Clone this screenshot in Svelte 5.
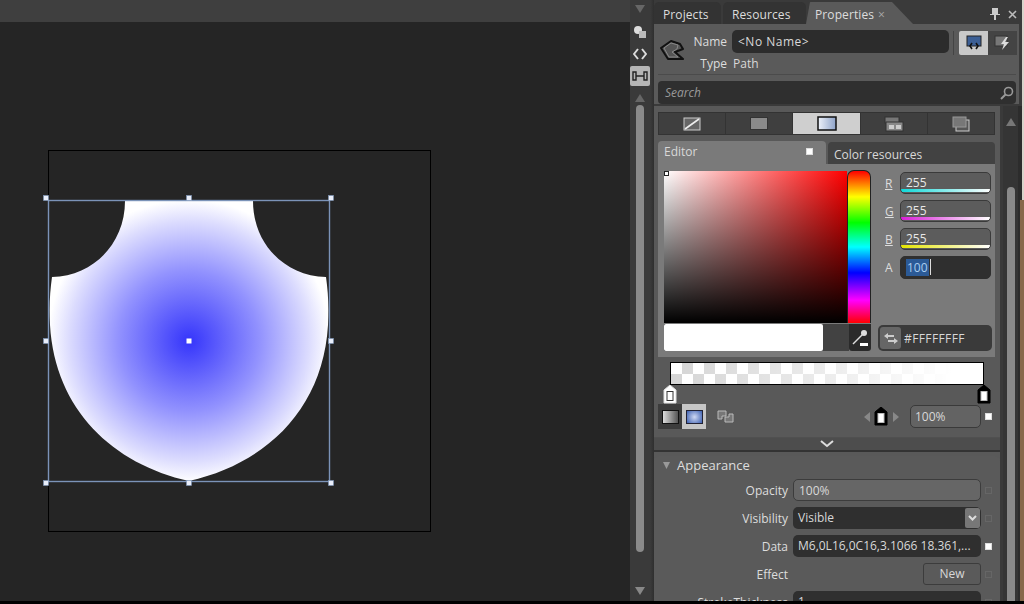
<script>
	const categories = ["none", "solid", "gradient", "tile", "resource"];
	const channels = [
		{ label: "R", value: 255, cls: "red" },
		{ label: "G", value: 255, cls: "green" },
		{ label: "B", value: 255, cls: "blue" }
	];
</script>

{#snippet stop(active)}
	<svg class="stop" width="14" height="19" viewBox="0 0 14 19">
		<path d="M7 0 L13 5 V18 H1 V5 Z" fill={active ? "#000" : "#fff"} stroke={active ? "#000" : "#ddd"} />
		<rect x="4" y="6.5" width="6" height="9" fill="#fff" stroke={active ? "#bbb" : "#333"} />
	</svg>
{/snippet}

{#snippet check(on)}
	<span class="check" class:on></span>
{/snippet}

<div class="app">
	<div class="screen">
		<section class="stage">
			<div class="menubar"></div>
			<svg class="canvas" width="630" height="579" viewBox="0 22 630 579">
				<defs>
					<radialGradient id="blueglow" gradientUnits="userSpaceOnUse" cx="189" cy="341" r="141">
						<stop offset="0" stop-color="#3535fb" />
						<stop offset="0.5" stop-color="#9292fe" />
						<stop offset="0.85" stop-color="#dcdcfe" />
						<stop offset="1" stop-color="#fff" />
					</radialGradient>
				</defs>
				<rect x="48.5" y="150.5" width="382" height="381" fill="none" stroke="#000" />
				<path
					d="M125 201 H253 C253 243 284 276 326 277 C328 292 329 305 328 325 C323 410 265 464 189 481 C113 464 55 410 50 325 C49 305 50 292 52 277 C94 276 125 243 125 201 Z"
					fill="url(#blueglow)"
				/>
				<rect x="48.5" y="200.5" width="281" height="281" fill="none" stroke="#7b93b8" stroke-width="1.4" />
				{#each [46, 189, 331] as x}
					{#each [198, 341, 483] as y}
						{#if !(x === 189 && y === 341)}
							<rect x={x - 2.5} y={y - 2.5} width="5" height="5" fill="#e9eefa" stroke="#7b93b8" stroke-width="0.6" />
						{/if}
					{/each}
				{/each}
				<rect x="186.5" y="338.5" width="5" height="5" fill="#fff" />
			</svg>
		</section>

		<aside class="strip">
			<svg class="tri" width="10" height="8" viewBox="0 0 10 8"><path d="M0 0 H10 L5 8 Z" fill="#666" /></svg>
			<svg class="tool first" width="14" height="14" viewBox="0 0 14 14">
				<circle cx="5" cy="5" r="4" fill="#ddd" /><rect x="6" y="6" width="7" height="7" fill="#bbb" />
			</svg>
			<svg class="tool" width="14" height="14" viewBox="0 0 14 14">
				<path d="M5 2 L1 7 L5 12 M9 2 L13 7 L9 12" fill="none" stroke="#ddd" stroke-width="2" />
			</svg>
			<div class="toolbtn">
				<svg width="16" height="10" viewBox="0 0 16 10">
					<path d="M1 1 H4 V9 H1 Z M12 1 H15 V9 H12 Z M4 5 H12" fill="none" stroke="#222" stroke-width="1.4" />
				</svg>
			</div>
			<svg class="tri up" width="10" height="8" viewBox="0 0 10 8"><path d="M0 8 H10 L5 0 Z" fill="#666" /></svg>
			<div class="thumb"></div>
			<svg class="tri down" width="10" height="8" viewBox="0 0 10 8"><path d="M0 0 H10 L5 8 Z" fill="#888" /></svg>
		</aside>

		<section class="panel">
			<nav class="tabs">
				<span class="tab projects">Projects</span>
				<span class="tab resources">Resources</span>
				<span class="tab current">Properties <i>×</i></span>
				<span class="winbtns">
					<svg width="10" height="12" viewBox="0 0 10 12"><path d="M2 0 H8 V6 H10 V7 H6 V12 H4 V7 H0 V6 H2 Z" fill="#ccc" /></svg>
					<svg width="9" height="9" viewBox="0 0 9 9"><path d="M1 1 L8 8 M8 1 L1 8" stroke="#bbb" stroke-width="1.6" /></svg>
				</span>
			</nav>

			<header class="head">
				<div class="ident">
					<svg class="pathicon" width="26" height="24" viewBox="0 0 26 24">
						<path d="M1 9 L11 2 L20 5 L23 10 L15 13 L23 20 L8 20 Z" fill="#555" stroke="#111" stroke-width="2" stroke-linejoin="round" />
						<path d="M4 9 L11 4 L18 6 L17 10 L12 13 L18 18 L9 18 Z" fill="none" stroke="#888" />
					</svg>
					<div class="namegrid">
						<span class="lbl">Name</span>
						<span class="nameinput">&lt;No Name&gt;</span>
						<span class="lbl">Type</span>
						<span class="typeval">Path</span>
					</div>
					<div class="modes">
						<span class="mode on">
							<svg width="16" height="16" viewBox="0 0 16 16">
								<rect x="1" y="1" width="14" height="10" fill="#3c5f95" stroke="#222" />
								<path d="M6 8 L4 11 L6 14 M10 8 L12 11 L10 14" fill="none" stroke="#111" stroke-width="1.6" />
							</svg>
						</span>
						<span class="mode">
							<svg width="18" height="16" viewBox="0 0 18 16">
								<rect x="1" y="1" width="12" height="10" fill="#777" stroke="#333" />
								<path d="M12 2 L7 9 H10 L8 15 L15 7 H11 L14 2 Z" fill="#ddd" />
							</svg>
						</span>
					</div>
				</div>
				<div class="search">
					<em>Search</em>
					<svg width="14" height="14" viewBox="0 0 14 14">
						<circle cx="8.5" cy="5.5" r="4" fill="none" stroke="#999" stroke-width="1.6" />
						<path d="M5.5 8.5 L1 13" stroke="#999" stroke-width="2" />
					</svg>
				</div>
			</header>

			<div class="body">
				<div class="props">
					<div class="brushes">
						{#each categories as c}
							<span class="brush" class:active={c === "gradient"}>
								{#if c === "none"}
									<svg width="18" height="14" viewBox="0 0 18 14">
										<rect x="1" y="1" width="16" height="12" fill="#666" stroke="#ccc" />
										<path d="M2 12 L16 2" stroke="#eee" stroke-width="1.6" />
									</svg>
								{:else if c === "solid"}
									<svg width="18" height="14" viewBox="0 0 18 14"><rect x="0.5" y="0.5" width="17" height="12" fill="#8a8a8a" stroke="#333" /></svg>
								{:else if c === "gradient"}
									<svg width="20" height="16" viewBox="0 0 20 16">
										<defs>
											<linearGradient id="brushfill" x1="0" x2="1" y1="0" y2="0">
												<stop offset="0" stop-color="#eef2fa" /><stop offset="1" stop-color="#8da2c8" />
											</linearGradient>
										</defs>
										<rect x="1" y="1" width="18" height="13" fill="url(#brushfill)" stroke="#111" stroke-width="1.5" />
									</svg>
								{:else if c === "tile"}
									<svg width="20" height="16" viewBox="0 0 20 16">
										<rect x="1" y="1" width="14" height="6" fill="#777" stroke="#333" />
										<rect x="2" y="6" width="17" height="9" fill="#888" stroke="#333" />
										<rect x="5" y="9" width="5" height="4" fill="#ccc" /><rect x="12" y="9" width="5" height="4" fill="#ccc" />
									</svg>
								{:else}
									<svg width="18" height="16" viewBox="0 0 18 16">
										<rect x="4" y="4" width="13" height="11" fill="#555" stroke="#ccc" />
										<rect x="1" y="1" width="13" height="10" fill="#777" stroke="#999" />
									</svg>
								{/if}
							</span>
						{/each}
					</div>

					<div class="edtabs">
						<span class="edtab editor">Editor {@render check(true)}</span>
						<span class="edtab resources">Color resources</span>
					</div>
					<div class="editorbody">
						<div class="pickrow">
							<div class="sat"><span class="marker"></span></div>
							<div class="hue"></div>
							<div class="channels">
								{#each channels as ch}
									<div class="channel">
										<span class="chlabel u">{ch.label}</span>
										<span class="chfield {ch.cls}">{ch.value}</span>
									</div>
								{/each}
								<div class="channel">
									<span class="chlabel">A</span>
									<span class="chfield alpha"><b>100</b><span class="caret"></span></span>
								</div>
							</div>
						</div>
						<div class="swatchrow">
							<div class="swatch"><span></span></div>
							<div class="dropper">
								<svg width="18" height="18" viewBox="0 0 18 18">
									<circle cx="13" cy="4" r="3" fill="#ddd" />
									<path d="M12 5 L2 15" stroke="#ddd" stroke-width="1.5" />
									<rect x="9" y="14" width="8" height="3" fill="#fff" />
								</svg>
							</div>
							<div class="hex">
								<span class="swap">
									<svg width="16" height="13" viewBox="0 0 16 13">
										<path d="M1 4 L5 1 V3 H11 V5 H5 V7 Z M15 9 L11 12 V10 H5 V8 H11 V6 Z" fill="#ccc" />
									</svg>
								</span>
								#FFFFFFFF
							</div>
						</div>
					</div>

					<div class="ramp"><div class="rampfill"></div></div>
					<div class="stops">{@render stop(false)}{@render stop(true)}</div>

					<div class="rampctl">
						<span class="kind">
							<span class="kindbtn linear"><span></span></span>
							<span class="kindbtn radial on"><span></span></span>
						</span>
						<svg class="flip" width="19" height="17" viewBox="0 0 19 17">
							<path d="M2 3 H10 V8 H6 V11 H2 Z M17 14 H9 V9 H13 V6 H17 Z" fill="#777" stroke="#bbb" />
						</svg>
						<svg class="nav left" width="6" height="10" viewBox="0 0 6 10"><path d="M6 0 V10 L0 5 Z" fill="#888" /></svg>
						{@render stop(true)}
						<svg class="nav right" width="6" height="10" viewBox="0 0 6 10"><path d="M0 0 V10 L6 5 Z" fill="#888" /></svg>
						<span class="pct">100%</span>
						{@render check(true)}
					</div>

					<div class="expander">
						<svg width="14" height="8" viewBox="0 0 14 8"><path d="M1 1 L7 6 L13 1" fill="none" stroke="#ddd" stroke-width="2" /></svg>
					</div>

					<div class="appearance">
						<div class="apptitle">
							<svg width="7" height="7" viewBox="0 0 7 7"><path d="M0 0 H7 L3.5 7 Z" fill="#999" /></svg>
							Appearance
						</div>
						<div class="row">
							<label for="opacity">Opacity</label>
							<span id="opacity" class="val light">100%</span>
							{@render check(false)}
						</div>
						<div class="row">
							<label for="visibility">Visibility</label>
							<span id="visibility" class="val dark combo">Visible<i>
								<svg width="9" height="6" viewBox="0 0 9 6"><path d="M1 1 L4.5 4.5 L8 1" fill="none" stroke="#ddd" stroke-width="2" /></svg>
							</i></span>
							{@render check(false)}
						</div>
						<div class="row">
							<label for="data">Data</label>
							<span id="data" class="val dark">M6,0L16,0C16,3.1066 18.361,...</span>
							{@render check(true)}
						</div>
						<div class="row">
							<label for="effect">Effect</label>
							<span id="effect" class="newbtn">New</span>
							{@render check(false)}
						</div>
						<div class="row">
							<label for="stroke">StrokeThickness</label>
							<span id="stroke" class="val dark">1</span>
							{@render check(false)}
						</div>
					</div>
				</div>

				<div class="vbar">
					<svg width="10" height="8" viewBox="0 0 10 8"><path d="M0 8 H10 L5 0 Z" fill="#777" /></svg>
					<div class="vthumb"></div>
				</div>
				<div class="edge"></div>
			</div>
		</section>
		<div class="rim"></div>
	</div>
	<div class="foot"></div>
</div>

<style>
	:global(body) {
		margin: 0;
		background: #000;
	}

	.app {
		width: 1024px;
		height: 604px;
		overflow: hidden;
		display: flex;
		flex-direction: column;
		font-family: "Open Sans", sans-serif;
		font-size: 12px;
		color: #d8d8d8;
	}

	.screen {
		height: 601px;
		display: flex;
		overflow: hidden;
	}

	.foot {
		height: 3px;
		background: #000;
	}

	/* left, design surface */
	.stage {
		width: 630px;
		background: #252525;
	}

	.menubar {
		height: 22px;
		background: #3f3f3f;
	}

	.canvas {
		display: block;
	}

	/* tool strip */
	.strip {
		width: 24px;
		background: linear-gradient(to right, #3a3a3a 85%, #2f2f2f);
		display: flex;
		flex-direction: column;
		align-items: center;
		padding-right: 4px;
		box-sizing: border-box;
	}

	.tri {
		margin-top: 5px;
		flex: none;
	}

	.tool {
		margin-top: 8px;
		flex: none;
	}

	.tool.first {
		margin-top: 12px;
	}

	.toolbtn {
		width: 20px;
		height: 20px;
		margin-top: 5px;
		background: #b5b5b5;
		border-radius: 2px;
		display: flex;
		align-items: center;
		justify-content: center;
		flex: none;
	}

	.tri.up {
		margin-top: 8px;
	}

	.thumb {
		width: 8px;
		height: 447px;
		margin-top: 3px;
		border-radius: 4px;
		background: #8a8a8a;
		flex: none;
	}

	.tri.down {
		margin-top: 35px;
	}

	/* right panel */
	.panel {
		width: 368px;
		display: flex;
		flex-direction: column;
		background: #3a3a3a;
	}

	.rim {
		width: 2px;
		background: linear-gradient(to bottom, #d9d4cb 200px, #86684a 200px);
	}

	.tabs {
		height: 24px;
		display: flex;
		align-items: flex-end;
		flex: none;
		position: relative;
	}

	.tab {
		height: 22px;
		display: flex;
		align-items: center;
		box-sizing: border-box;
		background: #333;
		border-radius: 5px 5px 0 0;
		color: #ddd;
		letter-spacing: 0.1px;
		padding-top: 3px;
	}

	.tab.projects {
		width: 67px;
		padding-left: 9px;
		margin-right: 2px;
	}

	.tab.resources {
		width: 83px;
		padding-left: 9px;
	}

	.tab.current {
		width: 107px;
		padding-left: 9px;
		background: #5a5a5a;
		clip-path: polygon(4px 0, 86px 0, 100% 100%, 0 100%);
	}

	.tab.current i {
		font-style: normal;
		margin-left: 4px;
		color: #aaa;
	}

	.winbtns {
		position: absolute;
		right: 5px;
		top: 8px;
		display: flex;
		gap: 8px;
		align-items: center;
	}

	.head {
		height: 82px;
		flex: none;
		box-sizing: border-box;
		background: #5a5a5a;
		border-bottom: 2px solid #3a3a3a;
		padding: 0 3px 0 4px;
		margin-right: 3px;
	}

	.ident {
		height: 50px;
		display: flex;
		border-bottom: 1px solid #4b4b4b;
	}

	.pathicon {
		margin: 15px 0 0 2px;
		flex: none;
	}

	.namegrid {
		display: grid;
		grid-template-columns: 37px 217px;
		grid-template-rows: 23px 21px;
		column-gap: 5px;
		margin: 6px 0 0 4px;
		align-items: center;
	}

	.lbl {
		text-align: right;
		color: #ddd;
		font-weight: 500;
	}

	.nameinput {
		height: 23px;
		background: #2c2c2c;
		border-radius: 5px;
		display: flex;
		align-items: center;
		padding-left: 6px;
		letter-spacing: 0.5px;
	}

	.typeval {
		padding-left: 1px;
	}

	.modes {
		display: flex;
		height: 24px;
		margin: 7px 0 0 4px;
		padding-left: 5px;
		border-left: 1px solid #444;
	}

	.mode {
		width: 29px;
		height: 24px;
		background: #444;
		display: flex;
		align-items: center;
		justify-content: center;
	}

	.mode.on {
		background: #c9c9c9;
		border-radius: 2px 0 0 2px;
	}

	.search {
		height: 23px;
		margin-top: 6px;
		background: #2f2f2f;
		border-radius: 4px;
		display: flex;
		align-items: center;
		justify-content: space-between;
		padding: 0 2px 0 7px;
		color: #999;
	}

	.body {
		flex: 1;
		min-height: 0;
		display: flex;
		overflow: hidden;
	}

	.props {
		width: 346px;
		flex: none;
		background: #595959;
		display: flex;
		flex-direction: column;
		padding: 6px 0 0 4px;
		box-sizing: border-box;
	}

	.brushes {
		width: 337px;
		height: 23px;
		display: flex;
		flex: none;
		background: #3f3f3f;
		border: 1px solid #333;
		box-sizing: border-box;
	}

	.brush {
		flex: 1;
		display: flex;
		align-items: center;
		justify-content: center;
		border-right: 1px solid #333;
	}

	.brush:last-child {
		border-right: 0;
	}

	.brush.active {
		background: #cfcfcf;
	}

	.edtabs {
		width: 337px;
		height: 23px;
		margin-top: 6px;
		display: flex;
		flex: none;
		align-items: flex-start;
		gap: 2px;
	}

	.edtab {
		height: 23px;
		display: flex;
		align-items: center;
		justify-content: space-between;
		box-sizing: border-box;
		padding: 0 6px;
	}

	.edtab.editor {
		width: 168px;
		background: #7a7a7a;
		border-radius: 4px 4px 0 0;
		padding-bottom: 2px;
		padding-right: 13px;
	}

	.edtab.resources {
		flex: 1;
		margin-top: 1px;
		padding-top: 2px;
		background: #424242;
		border-radius: 4px 4px 0 0;
	}

	.check {
		width: 7px;
		height: 7px;
		flex: none;
		box-sizing: border-box;
		border: 1px solid #666;
		background: transparent;
	}

	.check.on {
		background: #fff;
		border-color: #ddd;
	}

	.editorbody {
		width: 337px;
		height: 193px;
		flex: none;
		background: #7a7a7a;
		box-sizing: border-box;
		padding: 7px 3px 0 6px;
	}

	.pickrow {
		display: flex;
		height: 152px;
	}

	.sat {
		width: 183px;
		height: 152px;
		position: relative;
		background:
			linear-gradient(to top, #000, transparent),
			linear-gradient(to right, #fff, #f00);
	}

	.marker {
		position: absolute;
		left: 0;
		top: 0;
		width: 3px;
		height: 3px;
		border: 1px solid #222;
		background: #fff;
	}

	.hue {
		width: 24px;
		height: 153px;
		margin-top: -1px;
		background: linear-gradient(
			to bottom,
			#f00 0%,
			#ff0 17%,
			#0f0 34%,
			#0ff 50%,
			#00f 67%,
			#f0f 85%,
			#f00 100%
		);
		border: 1px solid #222;
		border-bottom: 0;
		box-sizing: border-box;
		border-radius: 7px 7px 0 0;
	}

	.channels {
		margin-left: 11px;
		flex: 1;
		display: flex;
		flex-direction: column;
		gap: 6px;
		padding-top: 1px;
	}

	.channel {
		display: flex;
		align-items: center;
		height: 22px;
	}

	.chlabel {
		width: 18px;
		box-sizing: border-box;
		padding-left: 3px;
		color: #ddd;
	}

	.chlabel.u {
		text-decoration: underline;
	}

	.chfield {
		width: 91px;
		height: 22px;
		box-sizing: border-box;
		border: 1px solid #3a3a3a;
		border-radius: 5px;
		padding-left: 5px;
		line-height: 20px;
		color: #e8e8e8;
		background-color: #5c5c5c;
		background-repeat: no-repeat;
		background-size: 100% 3px;
		background-position: left bottom 1px;
	}

	.chfield.red {
		background-image: linear-gradient(to right, #10d8d8, #fff);
	}

	.chfield.green {
		background-image: linear-gradient(to right, #d81fd8, #fff);
	}

	.chfield.blue {
		background-image: linear-gradient(to right, #e4e400, #fff);
	}

	.chfield.alpha {
		background-color: #2f2f2f;
		border-color: #2f2f2f;
		display: flex;
		align-items: center;
		height: 23px;
	}

	.chfield.alpha b {
		font-weight: 400;
		background: #2b5a96;
		color: #a9cdf0;
		height: 17px;
		line-height: 17px;
		padding: 0 1px;
	}

	.caret {
		width: 1px;
		height: 16px;
		background: #ddd;
		margin-left: 1px;
	}

	.swatchrow {
		display: flex;
		margin-top: 1px;
		height: 28px;
	}

	.swatch {
		width: 185px;
		height: 27px;
		background: #424242;
	}

	.swatch span {
		display: block;
		width: 159px;
		height: 27px;
		background: #fff;
		border-radius: 2px;
	}

	.dropper {
		width: 22px;
		height: 27px;
		background: #2a2a2a;
		border-radius: 0 0 3px 3px;
		display: flex;
		align-items: center;
		justify-content: center;
	}

	.hex {
		margin: 1px 0 0 7px;
		width: 114px;
		height: 26px;
		box-sizing: border-box;
		background: #3a3a3a;
		border-radius: 5px;
		display: flex;
		align-items: center;
		gap: 3px;
		padding-left: 2px;
		letter-spacing: 0.4px;
	}

	.swap {
		width: 21px;
		height: 22px;
		background: #666;
		border-radius: 3px;
		display: flex;
		align-items: center;
		justify-content: center;
	}

	.ramp {
		width: 314px;
		height: 23px;
		margin: 5px 0 0 12px;
		box-sizing: border-box;
		border: 1px solid #000;
		flex: none;
		background: repeating-conic-gradient(#d0d0d0 0 25%, #fff 0 50%) 0 0 / 22px 22px;
	}

	.rampfill {
		height: 100%;
		background: linear-gradient(to right, rgba(255, 255, 255, 0.1), #fff 90%);
	}

	.stops {
		width: 328px;
		margin-left: 5px;
		display: flex;
		justify-content: space-between;
		height: 19px;
		flex: none;
	}

	.stop {
		display: block;
		flex: none;
	}

	.rampctl {
		display: flex;
		align-items: center;
		height: 25px;
		flex: none;
	}

	.kind {
		display: flex;
		height: 25px;
	}

	.kindbtn {
		width: 24px;
		height: 25px;
		box-sizing: border-box;
		background: #3c3c3c;
		display: flex;
		align-items: center;
		justify-content: center;
	}

	.kindbtn.on {
		background: #c6c6c6;
	}

	.kindbtn span {
		width: 17px;
		height: 14px;
		box-sizing: border-box;
		border: 1px solid #111;
		background: linear-gradient(to right, #ddd, #555);
	}

	.kindbtn.on span {
		background: radial-gradient(circle, #cfd8f2, #3c5fb0);
		border-color: #223;
	}

	.flip {
		margin-left: 10px;
	}

	.nav.left {
		margin-left: 129px;
		margin-right: 4px;
	}

	.nav.right {
		margin-left: 5px;
	}

	.pct {
		width: 71px;
		height: 23px;
		box-sizing: border-box;
		margin: 0 4px 0 11px;
		border: 1px solid #3a3a3a;
		border-radius: 5px;
		background: #636363;
		padding-left: 4px;
		line-height: 21px;
	}

	.expander {
		height: 15px;
		box-sizing: border-box;
		margin: 8px 0 0 -4px;
		background: #4d4d4d;
		border-bottom: 2px solid #333;
		border-top: 1px solid #505050;
		display: flex;
		align-items: center;
		justify-content: center;
		flex: none;
	}

	.appearance {
		margin: 4px 0 0 -4px;
		flex: 1;
		background: #5a5a5a;
		border-radius: 5px 5px 0 0;
		padding-left: 9px;
	}

	.apptitle {
		height: 20px;
		box-sizing: border-box;
		padding-bottom: 2px;
		display: flex;
		align-items: center;
		gap: 7px;
		font-size: 13px;
		color: #ddd;
	}

	.row {
		height: 28px;
		display: flex;
		align-items: center;
	}

	.row label {
		width: 125px;
		text-align: right;
		margin-right: 5px;
		color: #ddd;
		white-space: nowrap;
	}

	.val {
		width: 188px;
		height: 22px;
		box-sizing: border-box;
		border-radius: 5px;
		padding-left: 5px;
		line-height: 21px;
		margin-right: 4px;
		position: relative;
		white-space: nowrap;
		overflow: hidden;
	}

	.val.light {
		background: #666;
		border: 1px solid #3c3c3c;
	}

	.val.dark {
		background: #2f2f2f;
	}

	.combo i {
		position: absolute;
		right: 1px;
		top: 1px;
		width: 15px;
		height: 20px;
		background: #777;
		border-radius: 2px;
		display: flex;
		align-items: center;
		justify-content: center;
	}

	.newbtn {
		width: 58px;
		height: 22px;
		margin: 0 4px 0 130px;
		box-sizing: border-box;
		border: 1px solid #3c3c3c;
		border-radius: 3px;
		text-align: center;
		line-height: 20px;
	}

	.vbar {
		width: 15px;
		margin-left: 3px;
		flex: none;
		background: #353535;
		display: flex;
		flex-direction: column;
		align-items: center;
		padding-top: 12px;
	}

	.vthumb {
		width: 8px;
		flex: 1;
		margin-top: 61px;
		background: #8a8a8a;
		border-radius: 4px 4px 0 0;
	}

	.edge {
		flex: 1;
		background:
			linear-gradient(#2c2c2c, #2c2c2c) 0 0 / 100% 94px no-repeat,
			linear-gradient(to right, #2c2c2c 50%, #86684a 50%);
	}
</style>
